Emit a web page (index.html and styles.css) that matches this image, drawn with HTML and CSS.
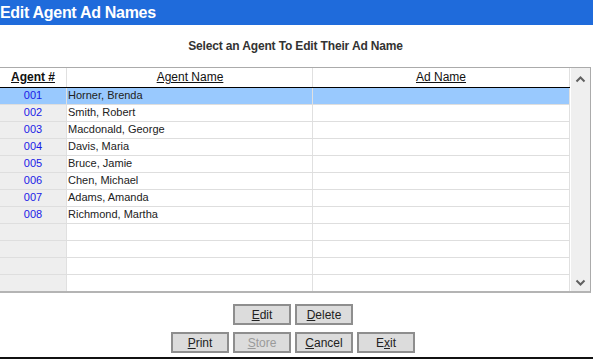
FILE: index.html
```html
<!DOCTYPE html>
<html lang="en">
<head>
    <meta charset="UTF-8">
    <title>Edit Agent Ad Names</title>
    <link rel="stylesheet" href="styles.css">
</head>
<body>
<div class="title-bar">Edit Agent Ad Names</div>
<div class="subtitle">Select an Agent To Edit Their Ad Name</div>
<div class="grid">
    <div class="grid-table">
        <div class="row head">
            <div class="cell num"><u>Agent #</u></div>
            <div class="cell name"><u>Agent Name</u></div>
            <div class="cell ad"><u>Ad Name</u></div>
        </div>
        <div class="grid-body">
            <div class="row selected">
                <div class="cell num">001</div><div class="cell name">Horner, Brenda</div><div class="cell ad"></div>
            </div>
            <div class="row">
                <div class="cell num">002</div><div class="cell name">Smith, Robert</div><div class="cell ad"></div>
            </div>
            <div class="row">
                <div class="cell num">003</div><div class="cell name">Macdonald, George</div><div class="cell ad"></div>
            </div>
            <div class="row">
                <div class="cell num">004</div><div class="cell name">Davis, Maria</div><div class="cell ad"></div>
            </div>
            <div class="row">
                <div class="cell num">005</div><div class="cell name">Bruce, Jamie</div><div class="cell ad"></div>
            </div>
            <div class="row">
                <div class="cell num">006</div><div class="cell name">Chen, Michael</div><div class="cell ad"></div>
            </div>
            <div class="row">
                <div class="cell num">007</div><div class="cell name">Adams, Amanda</div><div class="cell ad"></div>
            </div>
            <div class="row">
                <div class="cell num">008</div><div class="cell name">Richmond, Martha</div><div class="cell ad"></div>
            </div>
            <div class="row"><div class="cell num"></div><div class="cell name"></div><div class="cell ad"></div></div>
            <div class="row"><div class="cell num"></div><div class="cell name"></div><div class="cell ad"></div></div>
            <div class="row"><div class="cell num"></div><div class="cell name"></div><div class="cell ad"></div></div>
            <div class="row"><div class="cell num"></div><div class="cell name"></div><div class="cell ad"></div></div>
        </div>
    </div>
    <div class="scrollbar">
        <svg width="11" height="7" viewBox="0 0 11 7"><path d="M1.5 5.5 L5.5 1.5 L9.5 5.5" fill="none" stroke="#606060" stroke-width="2"/></svg>
        <svg width="11" height="7" viewBox="0 0 11 7"><path d="M1.5 1.5 L5.5 5.5 L9.5 1.5" fill="none" stroke="#606060" stroke-width="2"/></svg>
    </div>
</div>
<div class="buttons">
    <div class="btn-row">
        <button class="btn"><u>E</u>dit</button>
        <button class="btn"><u>D</u>elete</button>
    </div>
    <div class="btn-row">
        <button class="btn"><u>P</u>rint</button>
        <button class="btn" disabled><u>S</u>tore</button>
        <button class="btn"><u>C</u>ancel</button>
        <button class="btn">E<u>x</u>it</button>
    </div>
</div>
<div class="bottom-line"></div>
</body>
</html>
```

FILE: styles.css
```css
*{
    box-sizing: border-box;
}
body{
    margin: 0;
    width: 593px;
    font-family: "Liberation Sans", Arial, sans-serif;
    font-size: 12px;
    color: #222;
    background: #fff;
}
.title-bar{
    height: 25px;
    background: #1f6bdb;
    color: #fff;
    font-size: 16px;
    font-weight: bold;
    letter-spacing: -0.3px;
    line-height: 26px;
    white-space: nowrap;
}
.subtitle{
    height: 42px;
    padding-top: 13px;
    line-height: 16px;
    text-align: center;
    font-weight: bold;
    letter-spacing: -0.15px;
    color: #333;
    width: 591px;
}
.grid{
    display: flex;
    width: 591px;
    height: 226px;
    border-top: 1px solid #ababab;
    border-right: 1px solid #ababab;
    border-bottom: 2px solid #b4b4b4;
}
.grid-table{
    width: 570px;
    margin-right: 1px;
}
.row{
    display: flex;
    height: 17px;
    border-bottom: 1px solid #dedede;
    font-size: 11px;
}
.row.head{
    height: 20px;
    border-bottom: 1px solid #000;
    font-size: 12px;
}
.cell{
    line-height: 15px;
    white-space: nowrap;
    overflow: hidden;
}
.head .cell{
    line-height: 19px;
    text-align: center;
    color: #111;
    background: #fff;
}
.num{
    width: 67px;
    border-right: 1px solid #e0e0e0;
    text-align: center;
    color: #1a1ae6;
    background: #eeeeee;
}
.head .num{
    font-weight: bold;
}
.name{
    width: 246px;
    border-right: 1px solid #e0e0e0;
    padding-left: 1px;
}
.ad{
    width: 257px;
    border-right: 1px solid #e0e0e0;
}
.grid-body{
    height: 203px;
    overflow: hidden;
}
.row.selected .cell{
    background: #99c9fe;
}
.scrollbar{
    width: 19px;
    background: #efefef;
    display: flex;
    flex-direction: column;
    justify-content: space-between;
    align-items: center;
    padding: 8px 0 5px 0;
}
.buttons{
    width: 586px;
    padding-top: 11px;
    display: flex;
    flex-direction: column;
    align-items: center;
    gap: 7px;
}
.btn-row{
    display: flex;
    gap: 4px;
}
.btn{
    width: 58px;
    height: 21px;
    padding: 0;
    font-family: "Liberation Sans", Arial, sans-serif;
    font-size: 12px;
    color: #222;
    background: #dcdcdc;
    border: 2px solid #8e8e8e;
    border-radius: 0;
}
.btn:disabled{
    color: #9a9a9a;
}
.bottom-line{
    margin-top: 4px;
    height: 2px;
    background: #111;
}
```
